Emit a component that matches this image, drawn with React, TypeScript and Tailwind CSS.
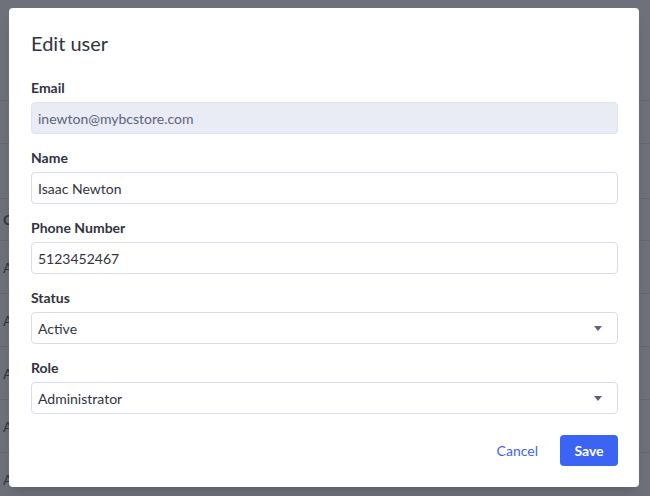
const FONT = { fontFamily: "Lato, 'Noto Sans', sans-serif" };

type Field = {
  label: string;
  value: string;
  disabled?: boolean;
  select?: boolean;
};

const FIELDS: Field[] = [
  { label: "Email", value: "inewton@mybcstore.com", disabled: true },
  { label: "Name", value: "Isaac Newton" },
  { label: "Phone Number", value: "5123452467" },
  { label: "Status", value: "Active", select: true },
  { label: "Role", value: "Administrator", select: true },
];

const ROWS = ["A", "A", "A", "A", "A"];

function Caret() {
  return (
    <svg width="8" height="5" viewBox="0 0 8 5" aria-hidden="true">
      <path d="M0 0h8L4 5z" fill="#5e637a" />
    </svg>
  );
}

function FormField({ field }: { field: Field }) {
  return (
    <div className="mb-[14px]">
      <div className="mb-1 h-5 text-[14px] font-bold leading-5 text-[#313440]">
        {field.label}
      </div>
      <div
        className={[
          "flex h-8 items-center justify-between rounded border px-[6px] text-[14px]",
          field.disabled
            ? "border-[#dfe3ee] bg-[#e9ecf5] text-[#5e637a]"
            : "border-[#d9dce9] bg-white text-[#313440]",
        ].join(" ")}
      >
        <span>{field.value}</span>
        {field.select ? (
          <span className="mr-[9px] flex items-center">
            <Caret />
          </span>
        ) : null}
      </div>
    </div>
  );
}

function BackgroundPage() {
  return (
    <div className="min-h-screen bg-white text-[14px] text-[#313440]">
      <div className="h-[100px]" />
      <div className="h-[43px] border-t border-[#d9dce9]" />
      <div className="h-[55px] border-t border-[#d9dce9]" />
      <div className="flex h-[42px] items-center border-t border-[#d9dce9] pl-[3px] font-bold">
        C
      </div>
      {ROWS.map((r, i) => (
        <div
          key={i}
          className="flex h-[53px] items-center border-t border-[#d9dce9] pl-[3px]"
        >
          {r}
        </div>
      ))}
    </div>
  );
}

export default function App() {
  return (
    <div className="relative h-[496px] w-[650px] overflow-hidden" style={FONT}>
      <BackgroundPage />
      <div className="absolute inset-0 bg-[#313440]/70" />
      <div className="absolute left-[9px] top-[8px] h-[479px] w-[630px] rounded bg-white pl-[22px] pr-[21px] shadow-lg">
        <div className="flex h-[70px] items-center pb-[1px] text-[20px] text-[#313440]">
          Edit user
        </div>
        {FIELDS.map((f) => (
          <FormField key={f.label} field={f} />
        ))}
        <div className="mt-[21px] flex items-center justify-end gap-[22px]">
          <button type="button" className="text-[14px] text-[#3c64f4]">
            Cancel
          </button>
          <button
            type="button"
            className="h-[31px] w-[58px] rounded bg-[#3c64f4] text-[14px] font-bold text-white"
          >
            Save
          </button>
        </div>
      </div>
    </div>
  );
}
